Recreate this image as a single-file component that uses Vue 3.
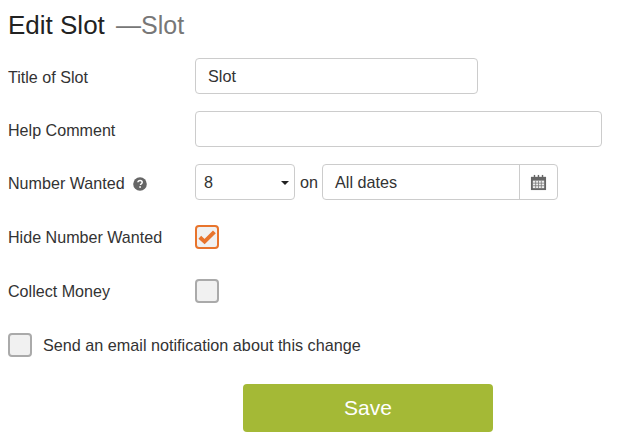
<script setup>
const title = 'Slot'
</script>

<template>
  <div class="page">
    <h1 class="heading">Edit Slot <small class="sub">—{{ title }}</small></h1>

    <div class="row">
      <label class="label">Title of Slot</label>
      <input class="input title-input" type="text" :value="title" />
    </div>

    <div class="row">
      <label class="label">Help Comment</label>
      <input class="input help-input" type="text" />
    </div>

    <div class="row number-row">
      <label class="label">
        Number Wanted
        <svg class="help" viewBox="0 0 14 14" width="14" height="14">
          <circle cx="7" cy="7" r="6.8" fill="#666" />
          <path d="M4.9 5.3c.1-1.2 1-1.9 2.2-1.9 1.2 0 2.1.7 2.1 1.8 0 .8-.4 1.2-1 1.6-.5.3-.7.6-.7 1.1v.2" fill="none" stroke="#fff" stroke-width="1.5" />
          <rect x="6.3" y="9.2" width="1.6" height="1.6" fill="#fff" />
        </svg>
      </label>
      <div class="select">
        <span>8</span>
        <span class="caret"></span>
      </div>
      <span class="on">on</span>
      <div class="date-group">
        <div class="date-value">All dates</div>
        <div class="date-btn">
          <svg viewBox="0 0 18 18" width="17" height="17">
            <path d="M1 3h16v14H1z" fill="#666" />
            <rect x="4" y="1" width="1.5" height="3" fill="#666" />
            <rect x="8.2" y="1" width="1.5" height="3" fill="#666" />
            <rect x="12.5" y="1" width="1.5" height="3" fill="#666" />
            <path d="M3 7h12v8H3z" fill="#eee" />
            <path d="M6 7v8M9 7v8M12 7v8M3 9.7h12M3 12.4h12" stroke="#777" stroke-width=".8" fill="none" />
          </svg>
        </div>
      </div>
    </div>

    <div class="row check-row">
      <label class="label">Hide Number Wanted</label>
      <span class="check checked">
        <svg viewBox="0 0 20 20" width="20" height="20">
          <path d="M2.8 10.2l4.8 4.4L17.4 4.8" fill="none" stroke="#e8742c" stroke-width="4" />
        </svg>
      </span>
    </div>

    <div class="row check-row">
      <label class="label">Collect Money</label>
      <span class="check"></span>
    </div>

    <div class="row notify">
      <span class="check"></span>
      <span class="notify-text">Send an email notification about this change</span>
    </div>

    <div class="actions">
      <button class="save" type="button">Save</button>
    </div>
  </div>
</template>

<style scoped>
.page {
  width: 625px;
  height: 444px;
  padding: 10px 8px 0;
  box-sizing: border-box;
  overflow: hidden;
  font-family: "Liberation Sans", Arial, sans-serif;
  font-size: 16.2px;
  color: #333;
}

.heading {
  margin: 0 0 17px;
  font-size: 26px;
  line-height: 31px;
  font-weight: 400;
  color: #222;
}

.sub {
  margin-left: 4px;
  font-size: 25px;
  color: #777;
}

.row {
  display: flex;
  align-items: center;
  height: 36px;
  margin-bottom: 17px;
}

.number-row {
  margin-bottom: 19px;
}

.check-row {
  margin-bottom: 18px;
}

.label {
  display: flex;
  align-items: center;
  width: 187px;
  padding-top: 2px;
  font-size: 16.1px;
  flex-shrink: 0;
}

.check-row .label {
  padding-top: 0;
}

.help {
  margin-left: 8px;
  margin-top: 2px;
}

.input {
  height: 36px;
  box-sizing: border-box;
  padding: 0 12px;
  border: 1px solid #ccc;
  border-radius: 4px;
  font: inherit;
  color: #333;
  outline: none;
}

.title-input {
  width: 283px;
}

.help-input {
  width: 407px;
}

.select {
  display: flex;
  align-items: center;
  justify-content: space-between;
  width: 100px;
  height: 36px;
  box-sizing: border-box;
  padding: 0 5px 0 8px;
  border: 1px solid #ccc;
  border-radius: 4px;
}

.caret {
  width: 0;
  height: 0;
  border-left: 4px solid transparent;
  border-right: 4px solid transparent;
  border-top: 4px solid #222;
  margin-top: 2px;
}

.on {
  margin: 0 4px 0 5px;
}

.date-group {
  display: flex;
  width: 236px;
  height: 36px;
  box-sizing: border-box;
  border: 1px solid #ccc;
  border-radius: 4px;
}

.date-value {
  flex: 1;
  display: flex;
  align-items: center;
  padding-left: 12px;
}

.date-btn {
  display: flex;
  align-items: center;
  justify-content: center;
  width: 37px;
  border-left: 1px solid #ccc;
}

.check {
  display: flex;
  align-items: center;
  justify-content: center;
  width: 24px;
  height: 24px;
  box-sizing: border-box;
  border: 2px solid #aaa;
  border-radius: 4px;
  background: #f1f1f1;
}

.check.checked {
  border-color: #e8742c;
}

.notify-text {
  margin-left: 11px;
}

.actions {
  display: flex;
  padding-left: 235px;
  margin-top: 21px;
}

.save {
  width: 250px;
  height: 48px;
  border: 0;
  border-radius: 4px;
  background: #a4b936;
  color: #fff;
  font-family: inherit;
  font-size: 21px;
}
</style>
